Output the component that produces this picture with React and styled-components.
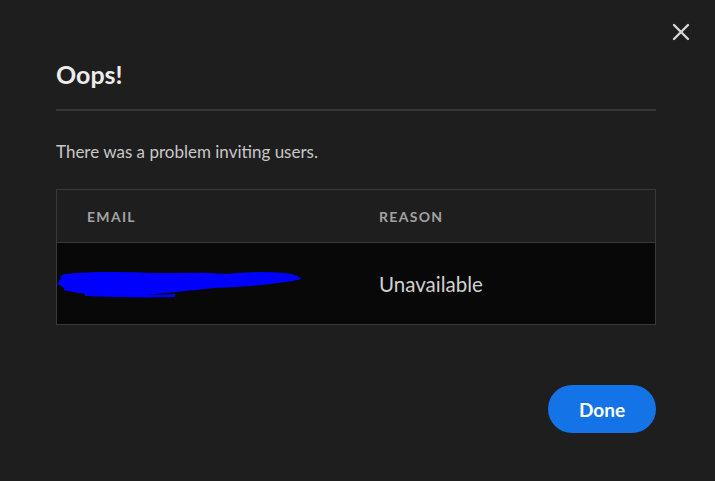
import styled, { createGlobalStyle } from "styled-components"

const GlobalStyle = createGlobalStyle`
    html, body {
        margin : 0;
        padding : 0;
        background : #1e1e1e;
    }
    body {
        font-family : "Source Sans Pro", Lato, "Noto Sans", sans-serif;
    }
`

const Dialog = styled.div`
    position : relative;
    box-sizing : border-box;
    width : 715px;
    height : 481px;
    padding : 56px 59px 0 56px;
    background : #1e1e1e;
    color : #d1d1d1;
`

const CloseButton = styled.button`
    position : absolute;
    top : 20px;
    right : 22px;
    width : 24px;
    height : 24px;
    padding : 0;
    border : none;
    background : transparent;
    display : flex;
    align-items : center;
    justify-content : center;
    cursor : pointer;
`

const Title = styled.h1`
    margin : 0;
    font-size : 25px;
    line-height : 36px;
    font-weight : 700;
    color : #ececec;
`

const Divider = styled.div`
    height : 2px;
    margin-top : 17px;
    background : #363636;
`

const Message = styled.p`
    margin : 30px 0 0;
    font-size : 17px;
    line-height : 22px;
    color : #c8c8c8;
`

const Table = styled.div`
    margin-top : 26px;
    border : 1px solid #3a3a3a;
`

const Row = styled.div`
    display : grid;
    grid-template-columns : 322px 1fr;
    align-items : center;
    height : ${p => p.$height}px;
    background : ${p => p.$dark ? "#080808" : "#1e1e1e"};
    border-top : ${p => p.$dark ? "1px solid #3a3a3a" : "none"};
`

const HeadCell = styled.div`
    padding-left : ${p => p.$first ? "30px" : "0"};
    font-size : 14px;
    font-weight : 700;
    letter-spacing : 1.3px;
    color : #a3a3a3;
`

const Cell = styled.div`
    font-size : 20.5px;
    color : #d0d0d0;
`

const Footer = styled.div`
    display : flex;
    justify-content : flex-end;
    margin-top : 60px;
`

const DoneButton = styled.button`
    width : 108px;
    height : 48px;
    border : none;
    border-radius : 24px;
    background : #1473e6;
    color : #ffffff;
    font-family : inherit;
    font-size : 19px;
    font-weight : 700;
    cursor : pointer;
`

const Scribble = () => (
    <svg width="250" height="34" viewBox="0 0 250 34" style={{ display: "block", marginLeft: "-2px", marginTop: "2px" }}>
        <path
            d="M10 6 C40 3 70 4 100 5 C130 5 150 4 170 6 C190 4 210 3 230 5 C238 6 244 8 246 11 C240 13 230 14 215 16 C200 18 180 19 160 20 C140 22 120 24 100 26 C80 29 60 28 40 27 C28 26 18 24 8 22 C12 20 6 18 2 16 C5 14 3 12 6 11 C4 9 6 7 10 6 Z"
            fill="#0000ff"
        />
        <path d="M30 25 C60 26 90 28 120 26 L120 29 C90 30 60 29 30 28 Z" fill="#0000ff" />
    </svg>
)

export default function App() {
    return (<>
        <GlobalStyle />
        <Dialog>
            <CloseButton aria-label="Close">
                <svg width="18" height="18" viewBox="0 0 18 18">
                    <path d="M2 2 L16 16 M16 2 L2 16" stroke="#d6d6d6" strokeWidth="2.4" strokeLinecap="round" />
                </svg>
            </CloseButton>
            <Title>Oops!</Title>
            <Divider />
            <Message>There was a problem inviting users.</Message>
            <Table>
                <Row $height={52}>
                    <HeadCell $first>EMAIL</HeadCell>
                    <HeadCell>REASON</HeadCell>
                </Row>
                <Row $height={81} $dark>
                    <div><Scribble /></div>
                    <Cell>Unavailable</Cell>
                </Row>
            </Table>
            <Footer>
                <DoneButton>Done</DoneButton>
            </Footer>
        </Dialog>
    </>)
}
